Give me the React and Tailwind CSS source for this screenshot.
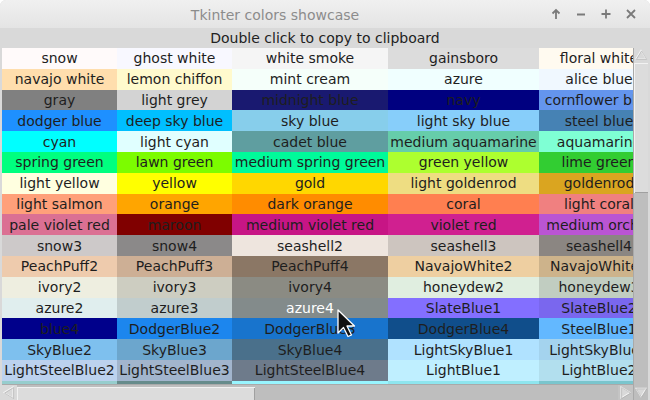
import React from "react";

const COLS = [115, 115, 156, 151, 120];

const ROWS = [
  [["snow", "#FFFAFA"], ["ghost white", "#F8F8FF"], ["white smoke", "#F5F5F5"], ["gainsboro", "#DCDCDC"], ["floral white", "#FFFAF0"]],
  [["navajo white", "#FFDEAD"], ["lemon chiffon", "#FFFACD"], ["mint cream", "#F5FFFA"], ["azure", "#F0FFFF"], ["alice blue", "#F0F8FF"]],
  [["gray", "#808080"], ["light grey", "#D3D3D3"], ["midnight blue", "#191970"], ["navy", "#000080"], ["cornflower blue", "#6495ED"]],
  [["dodger blue", "#1E90FF"], ["deep sky blue", "#00BFFF"], ["sky blue", "#87CEEB"], ["light sky blue", "#87CEFA"], ["steel blue", "#4682B4"]],
  [["cyan", "#00FFFF"], ["light cyan", "#E0FFFF"], ["cadet blue", "#5F9EA0"], ["medium aquamarine", "#66CDAA"], ["aquamarine", "#7FFFD4"]],
  [["spring green", "#00FF7F"], ["lawn green", "#7CFC00"], ["medium spring green", "#00FA9A"], ["green yellow", "#ADFF2F"], ["lime green", "#32CD32"]],
  [["light yellow", "#FFFFE0"], ["yellow", "#FFFF00"], ["gold", "#FFD700"], ["light goldenrod", "#EEDD82"], ["goldenrod", "#DAA520"]],
  [["light salmon", "#FFA07A"], ["orange", "#FFA500"], ["dark orange", "#FF8C00"], ["coral", "#FF7F50"], ["light coral", "#F08080"]],
  [["pale violet red", "#DB7093"], ["maroon", "#800000"], ["medium violet red", "#C71585"], ["violet red", "#D02090"], ["medium orchid", "#BA55D3"]],
  [["snow3", "#CDC9C9"], ["snow4", "#8B8989"], ["seashell2", "#EEE5DE"], ["seashell3", "#CDC5BF"], ["seashell4", "#8B8682"]],
  [["PeachPuff2", "#EECBAD"], ["PeachPuff3", "#CDAF95"], ["PeachPuff4", "#8B7765"], ["NavajoWhite2", "#EECFA1"], ["NavajoWhite3", "#CDB38B"]],
  [["ivory2", "#EEEEE0"], ["ivory3", "#CDCDC1"], ["ivory4", "#8B8B83"], ["honeydew2", "#E0EEE0"], ["honeydew3", "#C1CDC1"]],
  [["azure2", "#E0EEEE"], ["azure3", "#C1CDCD"], ["azure4", "#838B8B"], ["SlateBlue1", "#836FFF"], ["SlateBlue2", "#7A67EE"]],
  [["blue4", "#00008B"], ["DodgerBlue2", "#1C86EE"], ["DodgerBlue3", "#1874CD"], ["DodgerBlue4", "#104E8B"], ["SteelBlue1", "#63B8FF"]],
  [["SkyBlue2", "#7EC0EE"], ["SkyBlue3", "#6CA6CD"], ["SkyBlue4", "#4A708B"], ["LightSkyBlue1", "#B0E2FF"], ["LightSkyBlue2", "#A4D3EE"]],
  [["LightSteelBlue2", "#BCD2EE"], ["LightSteelBlue3", "#A2B5CD"], ["LightSteelBlue4", "#6E7B8B"], ["LightBlue1", "#BFEFFF"], ["LightBlue2", "#B2DFEE"]],
  [["PaleTurquoise3", "#96CDCD"], ["PaleTurquoise4", "#668B8B"], ["CadetBlue1", "#98F5FF"], ["CadetBlue2", "#8EE5EE"], ["CadetBlue3", "#7AC5CD"]],
];

const HOVERED = "azure4";

function TitleButtons() {
  return (
    <div className="flex items-center gap-[13px] pr-[13px] text-[#7a7a7a]">
      <svg width="12" height="12" viewBox="0 0 12 12" fill="none" stroke="currentColor" strokeWidth="1.8">
        <path d="M6 11V2M2.5 5.5L6 2l3.5 3.5" />
      </svg>
      <svg width="12" height="12" viewBox="0 0 12 12" fill="none" stroke="currentColor" strokeWidth="1.8">
        <path d="M2 6.5h8" />
      </svg>
      <svg width="12" height="12" viewBox="0 0 12 12" fill="none" stroke="currentColor" strokeWidth="1.8">
        <path d="M6 1.5v9M1.5 6h9" />
      </svg>
      <svg width="12" height="12" viewBox="0 0 12 12" fill="none" stroke="currentColor" strokeWidth="1.8">
        <path d="M2 2l8 8M10 2l-8 8" />
      </svg>
    </div>
  );
}

function Arrow({ dir }) {
  const pts = {
    up: "2,11 7.5,2 13,11",
    down: "2,3 7.5,12 13,3",
    left: "11,2 2,7.5 11,13",
    right: "3,2 12,7.5 3,13",
  }[dir];
  return (
    <svg width="15" height="15" viewBox="0 0 15 15">
      <polygon points={pts} fill="#d9d9d9" stroke="#f4f4f4" strokeWidth="1.2" />
      <polygon points={pts} fill="none" stroke="#a8a8a8" strokeWidth="0.6" transform="translate(0.6,0.6)" />
    </svg>
  );
}

function Cell({ name, bg, width }) {
  const hot = name === HOVERED;
  return (
    <div
      className={`shrink-0 h-full flex items-center justify-center whitespace-nowrap overflow-hidden ${hot ? "text-white" : "text-[#1e1e1e]"}`}
      style={{ width, backgroundColor: bg }}
    >
      {name}
    </div>
  );
}

export default function App() {
  return (
    <div
      className="relative w-[650px] h-[400px] overflow-hidden bg-white text-[14px] leading-none"
      style={{ fontFamily: '"DejaVu Sans", "Noto Sans", sans-serif' }}
    >
      <div className="h-full rounded-t-[6px] bg-[#d9d9d9] overflow-hidden flex flex-col">
        {/* window title bar */}
        <div className="h-[28px] shrink-0 flex items-center bg-gradient-to-b from-[#f0f0f0] to-[#e4e4e4]">
          <div className="w-[555px] flex justify-center text-[#8c8c8c] pt-[1px]">Tkinter colors showcase</div>
          <div className="flex-1 flex justify-end">
            <TitleButtons />
          </div>
        </div>

        {/* hint label */}
        <div className="h-[20px] shrink-0 flex items-center justify-center text-[#222]">
          Double click to copy to clipboard
        </div>

        <div className="flex flex-1 min-h-0 pl-[2px] pr-[2px]">
          <div className="w-[631px] flex flex-col">
            {/* colour table */}
            <div className="h-[337px] overflow-hidden">
              {ROWS.map((row, i) => (
                <div key={i} className="flex h-[20.8px]">
                  {row.map(([name, bg], j) => (
                    <Cell key={name} name={name} bg={bg} width={COLS[j]} />
                  ))}
                </div>
              ))}
            </div>

            {/* horizontal scrollbar */}
            <div className="h-[16px] shrink-0 flex items-end bg-[#bebebe] border-t border-[#a9a9a9]">
              <div className="w-[15px] h-[15px] bg-[#d9d9d9] flex items-center justify-center">
                <Arrow dir="left" />
              </div>
              <div className="w-[238px] h-[13px] bg-[#dcdcdc] border-t border-l border-[#f2f2f2] shadow-[inset_-1px_0_0_#a0a0a0]" />
              <div className="flex-1" />
              <div className="w-[15px] h-[15px] bg-[#c4c4c4] flex items-center justify-center">
                <Arrow dir="right" />
              </div>
            </div>
          </div>

          {/* vertical scrollbar */}
          <div className="w-[15px] flex flex-col bg-[#bebebe] border-l border-[#a9a9a9]">
            <div className="h-[15px] shrink-0 flex items-center justify-center bg-[#d9d9d9]">
              <Arrow dir="up" />
            </div>
            <div className="h-[130px] shrink-0 bg-[#dcdcdc] border-t border-l border-[#f2f2f2] shadow-[inset_0_-1px_0_#a0a0a0]" />
            <div className="flex-1" />
            <div className="h-[15px] shrink-0 flex items-center justify-center">
              <Arrow dir="down" />
            </div>
          </div>
        </div>
      </div>

      {/* mouse pointer */}
      <svg className="absolute left-[337px] top-[309px]" width="20" height="30" viewBox="0 0 20 30">
        <path
          d="M1 1 L1 24 L6.5 18.5 L11 27.5 L14.5 26 L10 17 L17.5 17 Z"
          fill="#111"
          stroke="#fff"
          strokeWidth="1.3"
          strokeLinejoin="round"
        />
      </svg>
    </div>
  );
}
